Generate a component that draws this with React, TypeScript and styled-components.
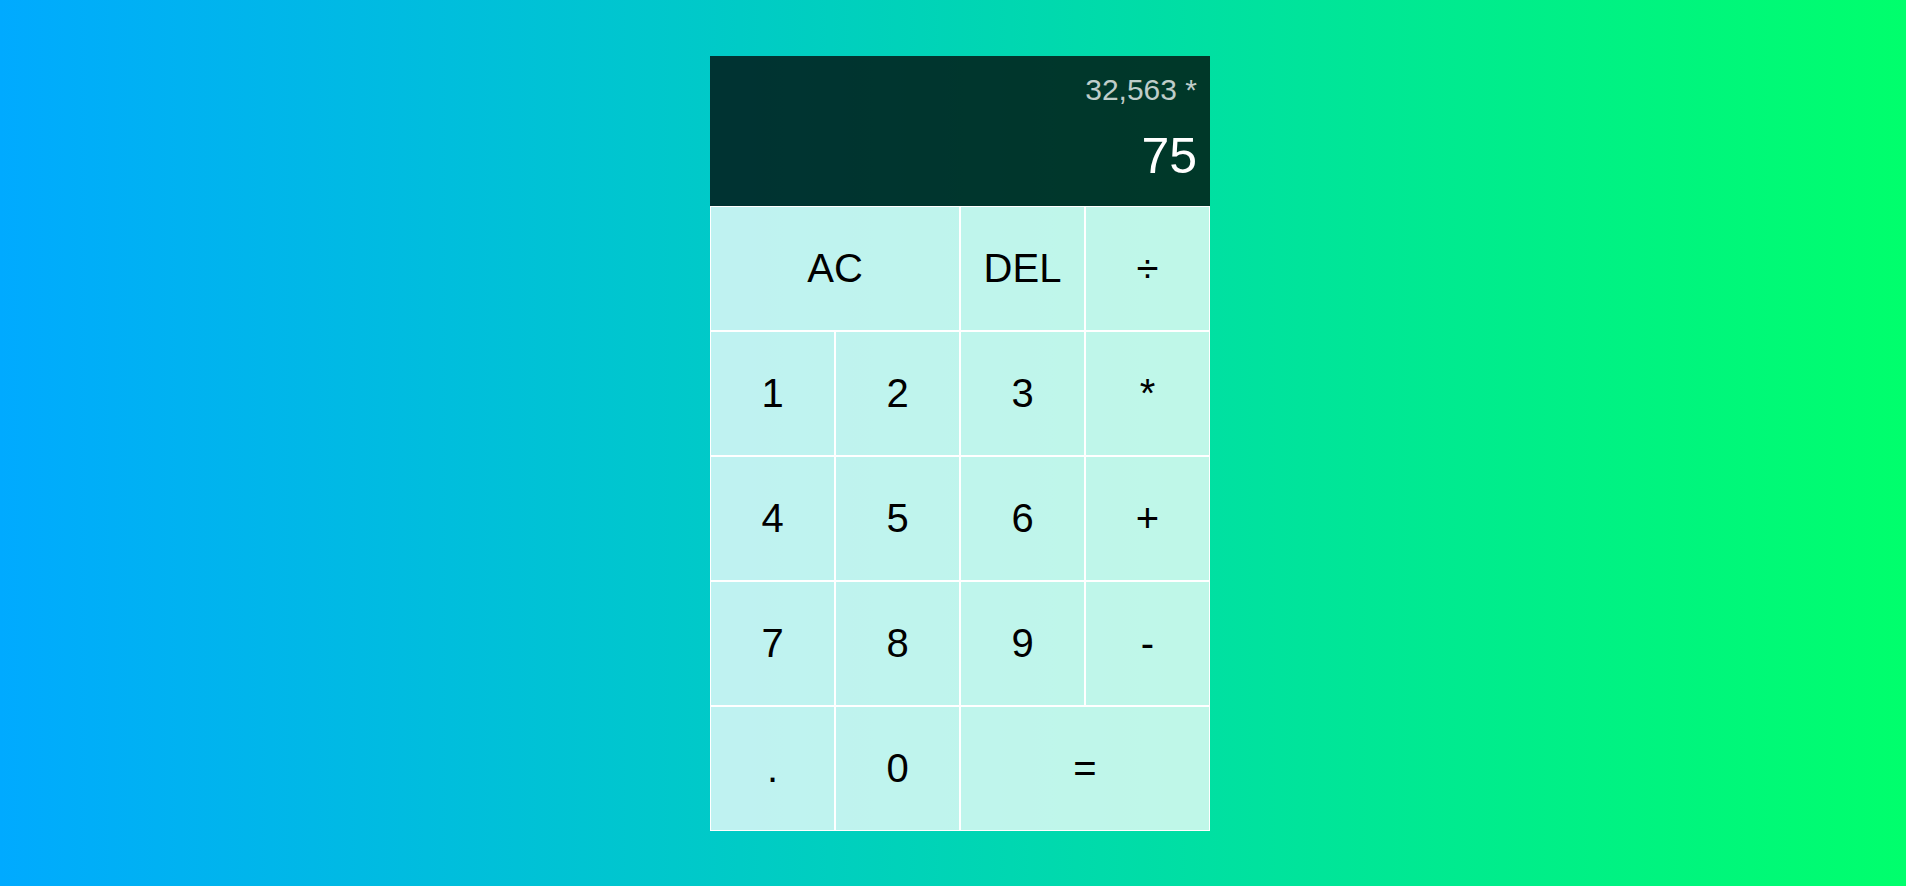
import styled, { createGlobalStyle } from "styled-components";

const GlobalStyle = createGlobalStyle`
  *, *::before, *::after {
    box-sizing: border-box;
    font-family: "Liberation Sans", Arial, sans-serif;
    font-weight: normal;
  }
  body {
    margin: 0;
    padding: 0;
    background: linear-gradient(to right, #00aaff, #00ff6c);
  }
`;

const keys: { label: string; span?: number }[] = [
  { label: "AC", span: 2 },
  { label: "DEL" },
  { label: "÷" },
  { label: "1" },
  { label: "2" },
  { label: "3" },
  { label: "*" },
  { label: "4" },
  { label: "5" },
  { label: "6" },
  { label: "+" },
  { label: "7" },
  { label: "8" },
  { label: "9" },
  { label: "-" },
  { label: "." },
  { label: "0" },
  { label: "=", span: 2 },
];

const App = () => {
  return (
    <>
      <GlobalStyle />
      <CalculatorGrid>
        <Output>
          <PreviousOperand>32,563 *</PreviousOperand>
          <CurrentOperand>75</CurrentOperand>
        </Output>
        {keys.map((k) => (
          <Key key={k.label} $span={k.span ?? 1}>
            {k.label}
          </Key>
        ))}
      </CalculatorGrid>
    </>
  );
};

export default App;

const CalculatorGrid = styled.div`
  display: grid;
  justify-content: center;
  align-content: center;
  min-height: 100vh;
  padding-left: 14px;
  grid-template-columns: repeat(4, 125px);
  grid-template-rows: minmax(150px, auto) repeat(5, 125px);
`;

const Key = styled.button<{ $span: number }>`
  grid-column: span ${(p) => p.$span};
  cursor: pointer;
  font-size: 40px;
  color: #000;
  border: 1px solid white;
  outline: none;
  padding: 0;
  background-color: rgba(255, 255, 255, 0.75);

  &:hover {
    background-color: rgba(255, 255, 255, 0.9);
  }
`;

const Output = styled.div`
  grid-column: 1 / -1;
  background-color: rgba(0, 0, 0, 0.75);
  display: flex;
  flex-direction: column;
  align-items: flex-end;
  justify-content: space-around;
  padding: 8px 13px 11px;
  word-wrap: break-word;
  word-break: break-all;
`;

const PreviousOperand = styled.div`
  color: rgba(255, 255, 255, 0.75);
  font-size: 30px;
`;

const CurrentOperand = styled.div`
  color: white;
  font-size: 50px;
`;
